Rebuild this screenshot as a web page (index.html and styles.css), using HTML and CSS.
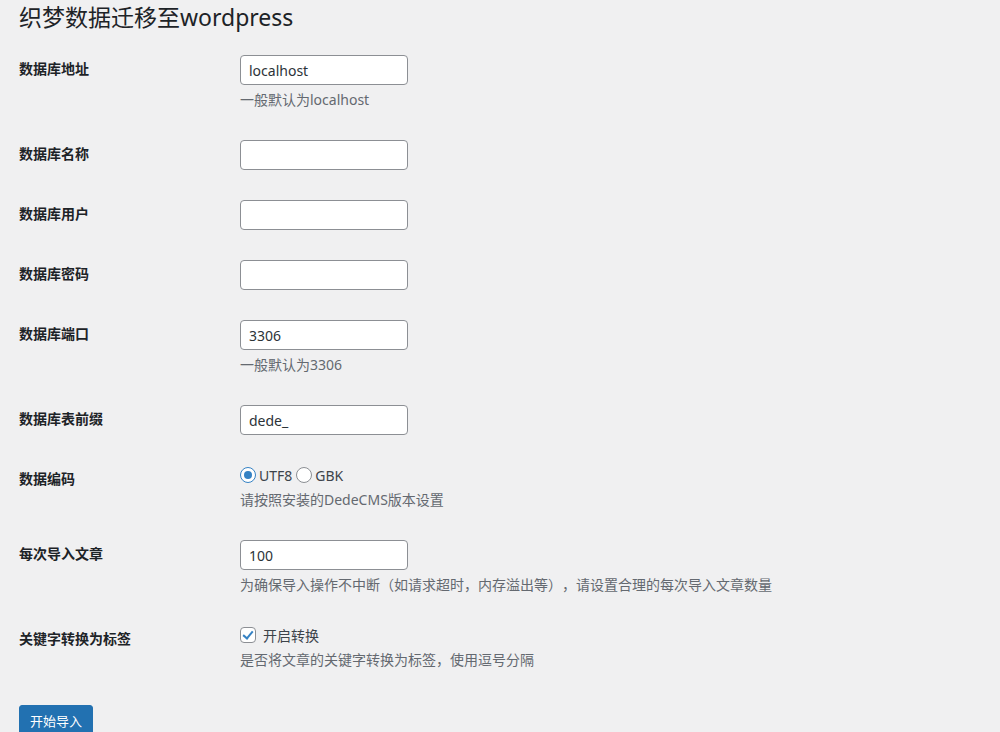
FILE: index.html
```html
<!DOCTYPE html>
<html lang="zh-CN">
<head>
  <meta charset="UTF-8" />
  <meta name="viewport" content="width=device-width, initial-scale=1.0" />
  <title>织梦数据迁移至wordpress</title>
  <link rel="stylesheet" href="styles.css">
</head>
<body>
  <div class="wrap">
    <h1>织梦数据迁移至wordpress</h1>
    <form class="form-table">
      <div class="row">
        <label class="th" for="dbhost">数据库地址</label>
        <div class="td">
          <input type="text" id="dbhost" class="text" value="localhost">
          <p class="description">一般默认为localhost</p>
        </div>
      </div>
      <div class="row">
        <label class="th" for="dbname">数据库名称</label>
        <div class="td"><input type="text" id="dbname" class="text"></div>
      </div>
      <div class="row">
        <label class="th" for="dbuser">数据库用户</label>
        <div class="td"><input type="text" id="dbuser" class="text"></div>
      </div>
      <div class="row">
        <label class="th" for="dbpass">数据库密码</label>
        <div class="td"><input type="password" id="dbpass" class="text"></div>
      </div>
      <div class="row">
        <label class="th" for="dbport">数据库端口</label>
        <div class="td">
          <input type="text" id="dbport" class="text" value="3306">
          <p class="description">一般默认为3306</p>
        </div>
      </div>
      <div class="row">
        <label class="th" for="dbprefix">数据库表前缀</label>
        <div class="td"><input type="text" id="dbprefix" class="text" value="dede_"></div>
      </div>
      <div class="row">
        <span class="th">数据编码</span>
        <div class="td">
          <div class="choice">
            <label><input type="radio" name="charset" value="utf8" checked> UTF8</label>
            <label><input type="radio" name="charset" value="gbk"> GBK</label>
          </div>
          <p class="description">请按照安装的DedeCMS版本设置</p>
        </div>
      </div>
      <div class="row">
        <label class="th" for="perpage">每次导入文章</label>
        <div class="td">
          <input type="text" id="perpage" class="text" value="100">
          <p class="description">为确保导入操作不中断（如请求超时，内存溢出等），请设置合理的每次导入文章数量</p>
        </div>
      </div>
      <div class="row">
        <span class="th">关键字转换为标签</span>
        <div class="td">
          <div class="choice">
            <label><input type="checkbox" name="tags" checked> 开启转换</label>
          </div>
          <p class="description">是否将文章的关键字转换为标签，使用逗号分隔</p>
        </div>
      </div>
      <p class="submit"><button type="submit" class="button-primary">开始导入</button></p>
    </form>
  </div>
</body>
</html>
```

FILE: styles.css
```css
body {
  margin: 0;
  background-color: #f0f0f1;
  color: #1d2327;
  font-family: "Segoe UI", "Noto Sans", "Noto Sans CJK SC", sans-serif;
  font-size: 14px;
  text-spacing-trim: space-all;
}
.wrap {
  padding: 0 0 0 19px;
}
h1 {
  font-size: 23px;
  font-weight: 400;
  line-height: 30px;
  margin: 2px 0 8px;
}
.row {
  display: grid;
  grid-template-columns: 221px 1fr;
}
.th {
  padding: 20px 0;
  font-weight: 600;
  line-height: 18px;
}
.td {
  padding: 15px 0;
}
input.text {
  display: block;
  box-sizing: border-box;
  width: 168px;
  height: 30px;
  margin: 0;
  padding: 0 8px;
  border: 1px solid #8c8f94;
  border-radius: 4px;
  background: #fff;
  color: #2c3338;
  font: inherit;
  font-size: 14px;
}
.description {
  margin: 4px 0 0;
  line-height: 21px;
  color: #646970;
}
.choice {
  display: flex;
  align-items: center;
  height: 20px;
}
.choice label {
  display: flex;
  align-items: center;
  color: #3c434a;
  margin-right: 4px;
}
.choice input {
  appearance: none;
  box-sizing: border-box;
  width: 16px;
  height: 16px;
  margin: 0 3px 0 0;
  border: 1px solid #8c8f94;
  background: #fff;
  position: relative;
}
.choice input[type=radio] {
  border-radius: 50%;
}
.choice input[type=radio]:checked {
  border-color: #3582c4;
}
.choice input[type=radio]:checked::before {
  content: "";
  position: absolute;
  left: 3px;
  top: 3px;
  width: 8px;
  height: 8px;
  border-radius: 50%;
  background: #3582c4;
}
.choice input[type=checkbox] {
  border-radius: 4px;
  margin-right: 7px;
}
.choice input[type=checkbox]:checked::before {
  content: "";
  position: absolute;
  left: 4px;
  top: 1px;
  width: 4px;
  height: 8px;
  border: solid #3582c4;
  border-width: 0 2px 2px 0;
  transform: rotate(40deg);
}
.submit {
  margin: 20px 0 0;
}
.button-primary {
  height: 30px;
  padding: 0 10px;
  border: 1px solid #2271b1;
  border-radius: 3px;
  background: #2271b1;
  color: #fff;
  font: inherit;
  font-size: 13px;
  cursor: pointer;
}
```
